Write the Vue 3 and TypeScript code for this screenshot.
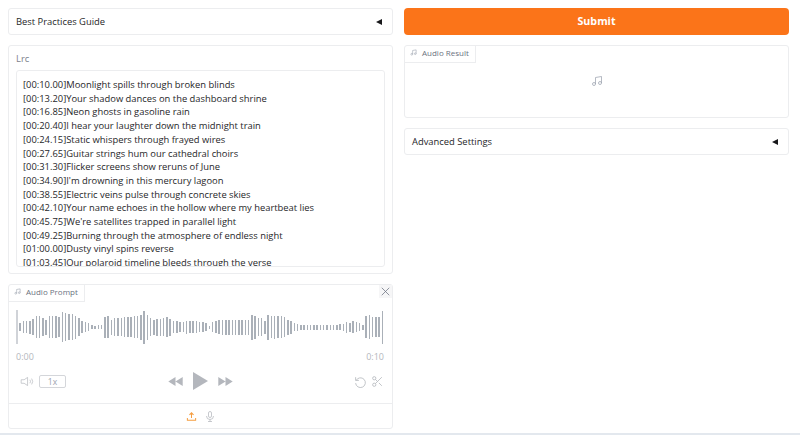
<script setup lang="ts">
const lyrics = [
  '[00:10.00]Moonlight spills through broken blinds',
  '[00:13.20]Your shadow dances on the dashboard shrine',
  '[00:16.85]Neon ghosts in gasoline rain',
  '[00:20.40]I hear your laughter down the midnight train',
  '[00:24.15]Static whispers through frayed wires',
  '[00:27.65]Guitar strings hum our cathedral choirs',
  '[00:31.30]Flicker screens show reruns of June',
  "[00:34.90]I'm drowning in this mercury lagoon",
  '[00:38.55]Electric veins pulse through concrete skies',
  '[00:42.10]Your name echoes in the hollow where my heartbeat lies',
  "[00:45.75]We're satellites trapped in parallel light",
  '[00:49.25]Burning through the atmosphere of endless night',
  '[01:00.00]Dusty vinyl spins reverse',
  '[01:03.45]Our polaroid timeline bleeds through the verse',
]

const bars = [
  34, 8, 12, 12, 13, 16, 22, 22, 18, 15, 22, 22, 22, 20, 30, 28, 26, 26, 23, 18, 12, 10, 8, 4, 3, 4, 4, 21, 22, 15, 18, 18, 18, 20, 20, 20,
  22, 22, 25, 33, 25, 18, 15, 17, 17, 18, 20, 17, 12, 12, 10, 10, 13, 12, 12, 12, 10, 10, 8, 3, 10, 12, 14, 15, 15, 15, 15, 15, 15, 15, 15, 15, 25, 23, 18,
  18, 13, 25, 22, 23, 22, 22, 20, 15, 13, 8, 7, 5, 5, 5, 5, 5, 5, 5, 5, 5, 5, 5, 5, 6, 7, 11, 9, 12, 10, 8, 5, 22, 24, 20, 20, 20, 33,
]
</script>

<template>
  <div class="page">
    <div class="col">
      <div class="panel accordion">
        <span>Best Practices Guide</span>
        <span class="caret"></span>
      </div>

      <div class="panel lrc">
        <div class="lrc-label">Lrc</div>
        <div class="lrc-box">
          <p v-for="line in lyrics" :key="line">{{ line }}</p>
        </div>
      </div>

      <div class="panel audio">
        <div class="tag">
          <svg class="tag-icon" viewBox="0 0 24 24"><path d="M9 18V5l12-2v13" /><circle cx="6" cy="18" r="3" /><circle cx="18" cy="16" r="3" /></svg>
          Audio Prompt
        </div>
        <button class="close">
          <svg viewBox="0 0 12 12"><path d="M1 1l10 10M11 1L1 11" /></svg>
        </button>
        <div class="wave">
          <i v-for="(h, i) in bars" :key="i" :style="{ height: h + 'px' }"></i>
        </div>
        <div class="times"><span>0:00</span><span>0:10</span></div>
        <div class="controls">
          <div class="ctl-left">
            <svg class="ic-vol" viewBox="0 0 24 18">
              <path d="M2 6h5l6-4v14l-6-4H2z" /><path d="M17 6q2 3 0 6M20 4q3.500 5 0 10" />
            </svg>
            <span class="speed">1x</span>
          </div>
          <div class="ctl-mid">
            <svg class="ic-skip" viewBox="0 0 16 10"><path d="M8 0v10L0 5zM16 0v10L8 5z" /></svg>
            <svg class="ic-play" viewBox="0 0 15 18"><path d="M0 0l15 9-15 9z" /></svg>
            <svg class="ic-skip" viewBox="0 0 16 10"><path d="M0 0v10l8-5zM8 0v10l8-5z" /></svg>
          </div>
          <div class="ctl-right">
            <svg class="ic-line" viewBox="0 0 24 24"><path d="M3 4v6h6" /><path d="M4 10a9 9 0 1 1-1 5" /></svg>
            <svg class="ic-line" viewBox="0 0 24 24"><circle cx="6" cy="6" r="3" /><circle cx="6" cy="18" r="3" /><path d="M20 4L8.100 15.900M14.500 14.500L20 20M8.100 8.100L12 12" /></svg>
          </div>
        </div>
        <div class="sources">
          <svg class="ic-upload" viewBox="0 0 24 24"><path d="M12 15V4M7.500 8.500L12 4l4.500 4.500" /><path d="M3 15v5h18v-5" /></svg>
          <svg class="ic-mic" viewBox="0 0 24 24"><rect x="9" y="2" width="6" height="12" rx="3" /><path d="M5 11a7 7 0 0 0 14 0M12 18v4M8 22h8" /></svg>
        </div>
      </div>
    </div>

    <div class="col">
      <button class="submit">Submit</button>

      <div class="panel result">
        <div class="tag">
          <svg class="tag-icon" viewBox="0 0 24 24"><path d="M9 18V5l12-2v13" /><circle cx="6" cy="18" r="3" /><circle cx="18" cy="16" r="3" /></svg>
          Audio Result
        </div>
        <div class="empty">
          <svg viewBox="0 0 24 24"><path d="M9 18V5l12-2v13" /><circle cx="6" cy="18" r="3" /><circle cx="18" cy="16" r="3" /></svg>
        </div>
      </div>

      <div class="panel accordion">
        <span>Advanced Settings</span>
        <span class="caret"></span>
      </div>
    </div>
  </div>
</template>

<style scoped>
.page {
  display: grid;
  grid-template-columns: 385px 385px;
  gap: 11px;
  height: 433px;
  padding: 8px 11px 0 8px;
  box-sizing: border-box;
  font-family: "Open Sans", "Noto Sans", sans-serif;
  color: #27272a;
  background: #fff;
}

.col {
  display: flex;
  flex-direction: column;
  gap: 10px;
}

.panel {
  position: relative;
  border: 1px solid #ecedef;
  border-radius: 3px;
  box-sizing: border-box;
  background: #fff;
}

.accordion {
  display: flex;
  align-items: center;
  justify-content: space-between;
  height: 27px;
  padding: 0 10px 0 7px;
  font-size: 9.400px;
}

.caret {
  width: 0;
  height: 0;
  border-top: 3.500px solid transparent;
  border-bottom: 3.500px solid transparent;
  border-right: 6px solid #18181b;
}

.lrc {
  height: 229px;
  padding: 0 7px;
  overflow: hidden;
}

.lrc-label {
  height: 24px;
  line-height: 25px;
  font-size: 9.400px;
  color: #7b818b;
}

.lrc-box {
  height: 197px;
  padding: 7px 8px 0 6px;
  border: 1px solid #ecedef;
  border-radius: 3px;
  box-sizing: border-box;
  overflow: hidden;
  font-size: 9.400px;
  line-height: 13.700px;
  color: #27272a;
}

.lrc-box p {
  margin: 0;
  white-space: nowrap;
}

.audio {
  height: 145px;
}

.tag {
  display: flex;
  align-items: center;
  gap: 5px;
  width: max-content;
  height: 17px;
  padding: 0 6px 3px 5px;
  border-right: 1px solid #ecedef;
  border-bottom: 1px solid #ecedef;
  box-sizing: border-box;
  font-size: 8px;
  color: #6b7280;
}

.tag-icon {
  width: 7px;
  height: 7px;
  fill: none;
  stroke: #9ca3af;
  stroke-width: 2;
}

.close {
  position: absolute;
  top: 0;
  right: 0;
  width: 13px;
  height: 13px;
  padding: 2px;
  border: 0;
  background: #f6f6f7;
}

.close svg {
  display: block;
  width: 100%;
  height: 100%;
  fill: none;
  stroke: #6b7280;
  stroke-width: 1;
}

.wave {
  display: flex;
  align-items: center;
  justify-content: space-between;
  height: 36px;
  margin: 7px 8px 0 7px;
}

.wave i {
  display: block;
  width: 1.500px;
  background: #aab0b8;
}

.wave i:first-child {
  background: #d0d3d8;
}

.times {
  display: flex;
  justify-content: space-between;
  margin: 6px 8px 0 7px;
  font-size: 9px;
  line-height: 12px;
  color: #b4b7bd;
}

.controls {
  display: grid;
  grid-template-columns: 1fr auto 1fr;
  align-items: center;
  height: 24px;
  margin: 6px 8px 0;
}

.ctl-left,
.ctl-mid,
.ctl-right {
  display: flex;
  align-items: center;
}

.ctl-left {
  gap: 5px;
  padding-left: 3px;
}

.ctl-mid {
  gap: 10px;
}

.ctl-right {
  justify-content: flex-end;
  gap: 4px;
}

.ic-vol {
  width: 14px;
  height: 11px;
  fill: none;
  stroke: #b4b7bd;
  stroke-width: 1.200;
}

.speed {
  display: flex;
  align-items: center;
  justify-content: center;
  width: 27px;
  height: 13px;
  border: 1px solid #d4d6da;
  border-radius: 2px;
  box-sizing: border-box;
  font-size: 8.500px;
  color: #9ca3af;
}

.ic-skip {
  width: 15px;
  height: 9px;
  fill: #b4b7bd;
}

.ic-play {
  width: 15px;
  height: 18px;
  fill: #b4b7bd;
}

.ic-line {
  width: 13px;
  height: 13px;
  fill: none;
  stroke: #b4b7bd;
  stroke-width: 1.500;
}

.sources {
  display: flex;
  align-items: center;
  justify-content: center;
  gap: 7px;
  height: 25px;
  margin-top: 10px;
  border-top: 1px solid #ecedef;
}

.ic-upload {
  width: 11px;
  height: 11px;
  fill: none;
  stroke: #f59e42;
  stroke-width: 2.200;
}

.ic-mic {
  width: 12px;
  height: 13px;
  fill: none;
  stroke: #b4b7bd;
  stroke-width: 1.500;
}

.submit {
  height: 27px;
  padding: 0 0 2px;
  border: 0;
  border-radius: 4px;
  background: #fb7419;
  color: #fff;
  font: 700 10.700px "Open Sans", sans-serif;
}

.result {
  height: 73px;
}

.empty {
  display: flex;
  justify-content: center;
  margin-top: 12px;
}

.empty svg {
  width: 12px;
  height: 12px;
  fill: none;
  stroke: #9ca3af;
  stroke-width: 1.500;
}
</style>

<style>
html {
  background: #fff;
}

body {
  height: 435px;
  overflow: hidden;
  box-shadow: inset 0 -2px 0 #e3e8ee;
}
</style>
